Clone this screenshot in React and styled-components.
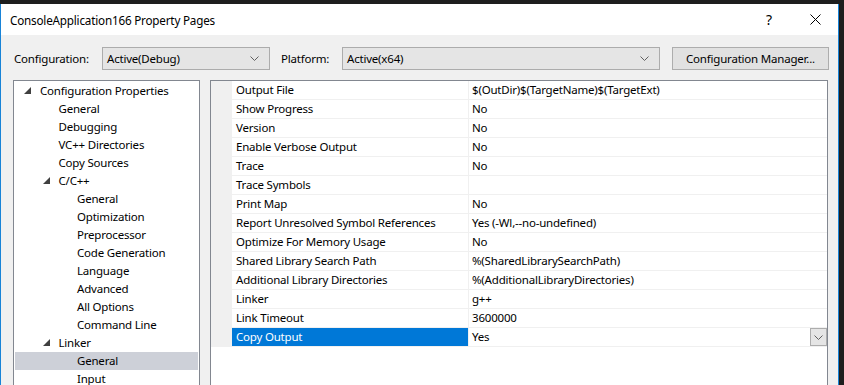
import React from 'react';
import styled, { createGlobalStyle } from 'styled-components';

const GlobalStyle = createGlobalStyle`
  html, body { margin: 0; padding: 0; background: #1e1e1e; }
  body {
    font-family: "Segoe UI", "Noto Sans", sans-serif;
    font-size: 11.5px;
    letter-spacing: -0.2px;
    color: #000;
  }
  * { box-sizing: border-box; }
`;

const Screen = styled.div`
  width: 844px;
  height: 385px;
  overflow: hidden;
  padding-top: 4px;
  display: flex;
  background: #1e1e1e;
`;

const Dialog = styled.div`
  width: 839px;
  height: 381px;
  flex-shrink: 0;
  display: flex;
  flex-direction: column;
  background: #f0f0f0;
  border-left: 1px solid #1883d7;
  border-right: 1px solid #1883d7;
  overflow: hidden;
`;

const TitleBar = styled.div`
  height: 31px;
  flex-shrink: 0;
  display: flex;
  align-items: center;
  background: #fff;
  padding-left: 9px;
`;

const TitleText = styled.div`
  flex: 1;
  white-space: nowrap;
  font-size: 11.7px;
`;

const CaptionButton = styled.div`
  width: 46px;
  height: 31px;
  display: flex;
  align-items: center;
  justify-content: center;
  font-size: 14px;
  color: #000;
`;

const Body = styled.div`
  flex: 1;
  display: flex;
  flex-direction: column;
  padding: 12px 10px 0 12px;
  min-height: 0;
`;

const Toolbar = styled.div`
  height: 23px;
  display: flex;
  align-items: center;
  flex-shrink: 0;
`;

const Label = styled.div`
  width: ${p => p.$width}px;
  padding-left: ${p => p.$pad}px;
  white-space: nowrap;
  flex-shrink: 0;
`;

const Combo = styled.div`
  width: ${p => p.$width}px;
  height: 23px;
  flex-shrink: 0;
  display: flex;
  align-items: center;
  justify-content: space-between;
  padding: 0 10px 0 4px;
  background: #e5e5e5;
  border: 1px solid #acacac;
`;

const Button = styled.div`
  width: 157px;
  height: 23px;
  margin-left: 12px;
  flex-shrink: 0;
  display: flex;
  align-items: center;
  justify-content: center;
  background: #e1e1e1;
  border: 1px solid #adadad;
`;

const Panels = styled.div`
  margin-top: 10px;
  flex: 1;
  display: flex;
  gap: 10px;
  min-height: 0;
`;

const Tree = styled.div`
  width: 187px;
  flex-shrink: 0;
  height: 320px;
  background: #fff;
  border: 1px solid #828790;
  padding-top: 1px;
`;

const TreeItem = styled.div`
  height: 18px;
  margin: 0 1px;
  padding-bottom: 1px;
  display: flex;
  align-items: center;
  padding-left: ${p => 9 + p.$level * 18.5}px;
  background: ${p => (p.$selected ? '#cdd0d8' : 'transparent')};
  white-space: nowrap;
`;

const Expander = styled.span`
  width: 16px;
  flex-shrink: 0;
  display: flex;
  align-items: center;
`;

const Grid = styled.div`
  flex: 1;
  height: 320px;
  background: #fff;
  border: 1px solid #828790;
`;

const Row = styled.div`
  display: flex;
  height: 19px;
`;

const Gutter = styled.div`
  width: 21px;
  flex-shrink: 0;
  background: #f0f0f0;
`;

const NameCell = styled.div`
  width: 237px;
  flex-shrink: 0;
  display: flex;
  align-items: center;
  padding: 0 0 1px 4px;
  border-right: 1px solid #f0f0f0;
  border-bottom: 1px solid #f0f0f0;
  background: ${p => (p.$selected ? '#0078d7' : '#fff')};
  color: ${p => (p.$selected ? '#fff' : '#000')};
  white-space: nowrap;
`;

const ValueCell = styled.div`
  flex: 1;
  display: flex;
  align-items: center;
  padding: 0 0 0 3px;
  border-bottom: 1px solid #f0f0f0;
  white-space: nowrap;
`;

const ValueText = styled.span`
  flex: 1;
  padding-bottom: 1px;
`;

const DropButton = styled.div`
  width: 17px;
  height: 18px;
  align-self: flex-start;
  display: flex;
  align-items: center;
  justify-content: center;
  background: #e5e5e5;
  border: 1px solid #adadad;
`;

const Chevron = () => (
  <svg width="9" height="5" viewBox="0 0 9 5">
    <polyline points="0.5,0.5 4.5,4.5 8.5,0.5" fill="none" stroke="#606060" strokeWidth="1" />
  </svg>
);

const Triangle = () => (
  <svg width="7" height="7" viewBox="0 0 7 7">
    <polygon points="7,0 7,7 0,7" fill="#404040" />
  </svg>
);

const CloseIcon = () => (
  <svg width="11" height="11" viewBox="0 0 11 11">
    <path d="M0.5 0.5 L10.5 10.5 M10.5 0.5 L0.5 10.5" stroke="#000" strokeWidth="1" fill="none" />
  </svg>
);

const treeItems = [
  { label: 'Configuration Properties', level: 0, expanded: true },
  { label: 'General', level: 1 },
  { label: 'Debugging', level: 1 },
  { label: 'VC++ Directories', level: 1 },
  { label: 'Copy Sources', level: 1 },
  { label: 'C/C++', level: 1, expanded: true },
  { label: 'General', level: 2 },
  { label: 'Optimization', level: 2 },
  { label: 'Preprocessor', level: 2 },
  { label: 'Code Generation', level: 2 },
  { label: 'Language', level: 2 },
  { label: 'Advanced', level: 2 },
  { label: 'All Options', level: 2 },
  { label: 'Command Line', level: 2 },
  { label: 'Linker', level: 1, expanded: true },
  { label: 'General', level: 2, selected: true },
  { label: 'Input', level: 2 },
];

const props = [
  ['Output File', '$(OutDir)$(TargetName)$(TargetExt)'],
  ['Show Progress', 'No'],
  ['Version', 'No'],
  ['Enable Verbose Output', 'No'],
  ['Trace', 'No'],
  ['Trace Symbols', ''],
  ['Print Map', 'No'],
  ['Report Unresolved Symbol References', 'Yes (-Wl,--no-undefined)'],
  ['Optimize For Memory Usage', 'No'],
  ['Shared Library Search Path', '%(SharedLibrarySearchPath)'],
  ['Additional Library Directories', '%(AdditionalLibraryDirectories)'],
  ['Linker', 'g++'],
  ['Link Timeout', '3600000'],
  ['Copy Output', 'Yes', true],
];

export default function App() {
  return (
    <>
      <GlobalStyle />
      <Screen>
        <Dialog>
          <TitleBar>
            <TitleText>ConsoleApplication166 Property Pages</TitleText>
            <CaptionButton>?</CaptionButton>
            <CaptionButton><CloseIcon /></CaptionButton>
          </TitleBar>
          <Body>
            <Toolbar>
              <Label $width={89} $pad={1}>Configuration:</Label>
              <Combo $width={168}>
                <span>Active(Debug)</span>
                <Chevron />
              </Combo>
              <Label $width={72} $pad={11}>Platform:</Label>
              <Combo $width={318}>
                <span>Active(x64)</span>
                <Chevron />
              </Combo>
              <Button>Configuration Manager...</Button>
            </Toolbar>
            <Panels>
              <Tree>
                {treeItems.map((t, i) => (
                  <TreeItem key={i} $level={t.level} $selected={t.selected}>
                    <Expander>{t.expanded ? <Triangle /> : null}</Expander>
                    {t.label}
                  </TreeItem>
                ))}
              </Tree>
              <Grid>
                {props.map(([name, value, sel], i) => (
                  <Row key={i}>
                    <Gutter />
                    <NameCell $selected={sel}>{name}</NameCell>
                    <ValueCell>
                      <ValueText>{value}</ValueText>
                      {sel ? <DropButton><Chevron /></DropButton> : null}
                    </ValueCell>
                  </Row>
                ))}
              </Grid>
            </Panels>
          </Body>
        </Dialog>
      </Screen>
    </>
  );
}
